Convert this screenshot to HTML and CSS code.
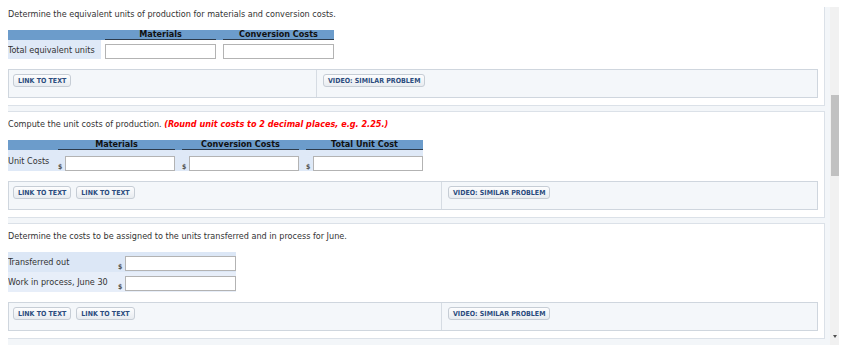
FILE: index.html
```html
<!DOCTYPE html>
<html lang="en">
<head>
  <meta charset="UTF-8">
  <title>Process Costing</title>
  <link rel="stylesheet" href="styles.css">
</head>
<body>
  <div class="frame">
    <div class="content">

      <div class="panel first">
        <p class="q">Determine the equivalent units of production for materials and conversion costs.</p>
        <table class="qt t-eq">
          <tr>
            <th class="lab"></th>
            <th class="c1"><span>Materials</span></th>
            <th class="c2"><span>Conversion Costs</span></th>
          </tr>
          <tr>
            <td class="lab">Total equivalent units</td>
            <td class="c1"><input type="text"></td>
            <td class="c2"><input type="text"></td>
          </tr>
        </table>
        <div class="links">
          <div class="links-left narrow">
            <button class="btn">Link to Text</button>
          </div>
          <div class="links-right">
            <button class="btn">Video: Similar Problem</button>
          </div>
        </div>
      </div>

      <div class="panel">
        <p class="q">Compute the unit costs of production. <em class="hint">(Round unit costs to 2 decimal places, e.g. 2.25.)</em></p>
        <table class="qt t-unit">
          <tr>
            <th class="lab"></th>
            <th class="c1"><span>Materials</span></th>
            <th class="c2"><span>Conversion Costs</span></th>
            <th class="c2"><span>Total Unit Cost</span></th>
          </tr>
          <tr class="blue">
            <td class="lab">Unit Costs</td>
            <td class="c1"><div class="money"><span class="cur">$</span><input type="text"></div></td>
            <td class="c2"><div class="money"><span class="cur">$</span><input type="text"></div></td>
            <td class="c2"><div class="money"><span class="cur">$</span><input type="text"></div></td>
          </tr>
        </table>
        <div class="links">
          <div class="links-left">
            <button class="btn">Link to Text</button>
            <button class="btn">Link to Text</button>
          </div>
          <div class="links-right">
            <button class="btn">Video: Similar Problem</button>
          </div>
        </div>
      </div>

      <div class="panel">
        <p class="q">Determine the costs to be assigned to the units transferred and in process for June.</p>
        <table class="qt t-cost">
          <tr class="r1">
            <td class="lab">Transferred out</td>
            <td class="c1"><div class="money"><span class="cur">$</span><input type="text"></div></td>
          </tr>
          <tr class="r2">
            <td class="lab">Work in process, June 30</td>
            <td class="c1"><div class="money"><span class="cur">$</span><input type="text"></div></td>
          </tr>
        </table>
        <div class="links">
          <div class="links-left">
            <button class="btn">Link to Text</button>
            <button class="btn">Link to Text</button>
          </div>
          <div class="links-right">
            <button class="btn">Video: Similar Problem</button>
          </div>
        </div>
      </div>

    </div>
    <div class="scrollbar">
      <div class="thumb"></div>
      <div class="arrow"></div>
    </div>
  </div>
</body>
</html>
```

FILE: styles.css
```css
* {
  box-sizing: border-box;
  margin: 0;
  padding: 0;
}

body {
  font-family: "DejaVu Sans Condensed", "DejaVu Sans", sans-serif;
  font-size: 9px;
  color: #333;
  background-color: #ffffff;
}

.frame {
  display: flex;
  height: 338px;
  margin: 7px 12px 0 8px;
}

.content {
  flex: 1;
  overflow: hidden;
  padding-right: 5px;
  background-color: #f3f6f9;
}

.panel {
  background-color: #ffffff;
  border: 1px solid #dbe1e8;
  border-left: none;
  padding: 7px 6px 7px 0;
  margin-bottom: 5px;
}

.panel.first {
  margin-top: -6px;
}

.q {
  line-height: 10px;
  margin-bottom: 11px;
  white-space: nowrap;
}

.hint {
  color: #ff0000;
  font-weight: bold;
}

/* question tables */
.qt {
  border-collapse: collapse;
  margin-bottom: 10px;
}

.qt th {
  height: 10px;
  padding: 0;
  background-color: #6c9ccb;
  color: #111;
  font-weight: bold;
  line-height: 9px;
}

.qt th span {
  display: block;
  text-align: center;
  border-bottom: 1px solid #2d3b4b;
}

.qt td {
  padding: 0;
  vertical-align: bottom;
}

.qt td.lab {
  background-color: #dfe9f7;
  vertical-align: middle;
  white-space: nowrap;
}

.qt input {
  display: block;
  width: 111px;
  height: 15px;
  border: 1px solid #b3b3b3;
  background-color: #ffffff;
}

.t-eq td {
  height: 19px;
}

.t-eq .lab {
  width: 93px;
  max-width: 93px;
}

.t-eq .c1 {
  padding-left: 4px;
}

.t-eq .c2 {
  padding-left: 7px;
}

.t-unit tr.blue td {
  height: 21px;
  background-color: #dfe9f7;
}

.t-unit .lab {
  width: 50px;
}

.t-unit .c2 {
  padding-left: 7px;
}

.t-unit input {
  width: 110px;
}

.money {
  display: flex;
  align-items: flex-end;
  gap: 2px;
}

.cur {
  width: 5px;
  font-size: 7px;
  line-height: 8px;
  font-weight: bold;
  color: #555;
}

.t-cost td {
  height: 20px;
  padding-bottom: 1px;
}

.t-cost tr.r1 td {
  background-color: #dce7f6;
}

.t-cost tr.r2 td {
  background-color: #e7eef9;
}

.t-cost td.lab {
  width: 108px;
  max-width: 108px;
}

.t-cost .c1 {
  padding-left: 2px;
}

/* link bar */
.links {
  display: flex;
  background-color: #f4f7fa;
  border: 1px solid #cfd6de;
}

.links-left {
  display: flex;
  gap: 5px;
  width: 433px;
  padding: 4px 4px 10px;
  border-right: 1px solid #d6dce3;
}

.links-left.narrow {
  width: 308px;
}

.links-right {
  padding: 4px 6px 10px;
}

.btn {
  height: 13px;
  padding: 0 4px;
  font-family: inherit;
  font-size: 7px;
  font-weight: bold;
  text-transform: uppercase;
  color: #2b4c7e;
  background: linear-gradient(#fdfdfe, #e8ecf0);
  border: 1px solid #c6cdd5;
  border-radius: 3px;
}

/* fake scrollbar */
.scrollbar {
  position: relative;
  width: 9px;
  background-color: #f1f1f1;
}

.thumb {
  height: 81px;
  margin: 88px 0 0 1px;
  background-color: #c1c1c1;
}

.arrow {
  position: absolute;
  left: 3px;
  bottom: 7px;
  border-left: 2.5px solid transparent;
  border-right: 2.5px solid transparent;
  border-top: 3px solid #505050;
}
```
